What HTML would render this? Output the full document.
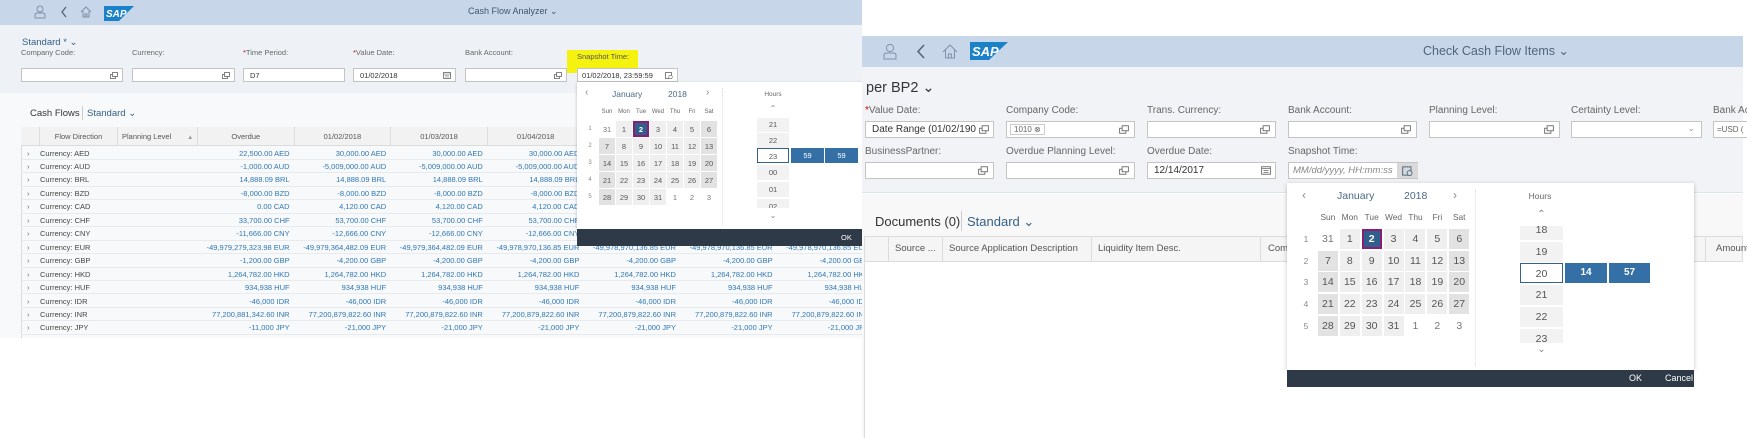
<!DOCTYPE html>
<html><head><meta charset="utf-8">
<style>
*{margin:0;padding:0;box-sizing:border-box}
body{width:1747px;height:438px;overflow:hidden;background:#fff;font-family:"Liberation Sans",sans-serif;position:relative}
.a{position:absolute}
.lbl{position:absolute;font-size:7.5px;color:#666;white-space:nowrap}
.inp{position:absolute;height:14px;background:#fff;border:1px solid #c4c4c4}
.vh{position:absolute;right:4px;top:3px;width:8px;height:7px}
.row{position:absolute;left:21px;height:13.45px;width:860px;border-bottom:1px solid #e8ebee;font-size:7.5px;line-height:13px;white-space:nowrap}
.row .ex{position:absolute;left:6px;color:#666}
.row .fd{position:absolute;left:19px;color:#444}
.row .v{position:absolute;width:96.6px;text-align:right;padding-right:5px;color:#2e77b5}
.c1{left:177px}.c2{left:273.6px}.c3{left:370.2px}.c4{left:466.8px}.c5{left:563.4px}.c6{left:660px}.c7{left:756.6px}
.hd{position:absolute;top:0;height:19px;line-height:19px;font-size:7.5px;color:#555;text-align:center;border-right:1px solid #dcdcdc}
.gl{position:absolute;display:grid;grid-template-columns:repeat(8,16px);grid-auto-rows:16px;column-gap:1px;row-gap:1px;font-size:7.5px;color:#555}
.gl div,.gr div{display:flex;align-items:center;justify-content:center}
.gr{position:absolute;display:grid;grid-template-columns:repeat(8,20px);grid-auto-rows:20px;column-gap:1.9px;row-gap:1.8px;font-size:10.5px;color:#555}
.w{background:#efefef}.e{background:#e2e2e2}.o{color:#777}.n{font-size:80%;color:#888}.h{font-size:80%;color:#666}
.s{background:#2f5f8a;color:#fff;font-weight:bold;outline:2px solid #8a1d78;outline-offset:-2px}
.hr{position:absolute;text-align:center;color:#555}
</style></head><body>

<!-- LEFT SCREEN -->
<div class="a" style="left:0;top:0;width:862px;height:25px;background:#c7d6e8"></div>
<svg class="a" style="left:34px;top:5px" width="12" height="14" viewBox="0 0 12 14"><circle cx="6" cy="4" r="3" fill="none" stroke="#7f93aa"/><path d="M1 13 V10 Q1 8 4 8 H8 Q11 8 11 10 V13 Z" fill="none" stroke="#7f93aa"/></svg>
<svg class="a" style="left:60px;top:6px" width="8" height="12"><path d="M6 1 L2 6 L6 11" fill="none" stroke="#50647c" stroke-width="1.3"/></svg>
<svg class="a" style="left:80px;top:6px" width="12" height="12"><path d="M1 6 L6 1 L11 6 M3 5 V11 H9 V5 M5 11 V8 H7 V11" fill="none" stroke="#7f93aa"/></svg>
<svg class="a" style="left:104px;top:6px" width="30" height="15"><path d="M0 0 H30 L15 15 H0 Z" fill="#1b82c9"/><text x="2" y="11" font-family="Liberation Sans" font-weight="bold" font-style="italic" font-size="10" fill="#fff">SAP</text></svg>
<div class="a" style="left:468px;top:6px;font-size:9px;color:#3f5670">Cash Flow Analyzer &#8964;</div>

<div class="a" style="left:0;top:25px;width:862px;height:68px;background:#eef2f6"></div>
<div class="a" style="left:22px;top:37px;font-size:9.5px;color:#346187">Standard * &#8964;</div>
<div class="lbl" style="left:21px;top:48px">Company Code:</div>
<div class="lbl" style="left:132px;top:48px">Currency:</div>
<div class="lbl" style="left:243px;top:48px"><span style="color:#c00">*</span>Time Period:</div>
<div class="lbl" style="left:353px;top:48px"><span style="color:#c00">*</span>Value Date:</div>
<div class="lbl" style="left:465px;top:48px">Bank Account:</div>
<div class="a" style="left:567px;top:50px;width:71px;height:23px;background:#f4f20e"></div>
<div class="lbl" style="left:577px;top:52px;color:#555">Snapshot Time:</div>
<div class="inp" style="left:21px;top:68px;width:102px"><svg class="vh" viewBox="0 0 8 7"><rect x="0.5" y="2.5" width="5" height="4" fill="none" stroke="#666" stroke-width=".8"/><rect x="2.5" y="0.5" width="5" height="4" fill="#fff" stroke="#666" stroke-width=".8"/></svg></div>
<div class="inp" style="left:132px;top:68px;width:103px"><svg class="vh" viewBox="0 0 8 7"><rect x="0.5" y="2.5" width="5" height="4" fill="none" stroke="#666" stroke-width=".8"/><rect x="2.5" y="0.5" width="5" height="4" fill="#fff" stroke="#666" stroke-width=".8"/></svg></div>
<div class="inp" style="left:243px;top:68px;width:102px;font-size:7.5px;padding:2px 6px;color:#333">D7</div>
<div class="inp" style="left:353px;top:68px;width:103px;font-size:7.5px;padding:2px 6px;color:#333">01/02/2018<svg class="vh" viewBox="0 0 8 7"><rect x="0.5" y="0.5" width="7" height="6" fill="none" stroke="#666" stroke-width=".8"/><path d="M0.5 2H7.5M2 3.5H6M2 5H6" stroke="#666" stroke-width=".6"/></svg></div>
<div class="inp" style="left:465px;top:68px;width:102px"><svg class="vh" viewBox="0 0 8 7"><rect x="0.5" y="2.5" width="5" height="4" fill="none" stroke="#666" stroke-width=".8"/><rect x="2.5" y="0.5" width="5" height="4" fill="#fff" stroke="#666" stroke-width=".8"/></svg></div>
<div class="inp" style="left:577px;top:68px;width:101px;font-size:7.5px;padding:2px 4px;color:#333">01/02/2018, 23:59:59<svg class="vh" viewBox="0 0 8 7"><rect x="0.5" y="0.5" width="6" height="6" fill="none" stroke="#666" stroke-width=".8"/><circle cx="5.5" cy="5" r="1.8" fill="#fff" stroke="#666" stroke-width=".6"/></svg></div>

<div class="a" style="left:0;top:93px;width:862px;height:245px;background:#f8f9fa"></div>
<div class="a" style="left:30px;top:108px;font-size:9.5px;color:#333">Cash Flows</div>
<div class="a" style="left:82px;top:106px;width:1px;height:14px;background:#ccc"></div>
<div class="a" style="left:87px;top:108px;font-size:9.5px;color:#346187">Standard &#8964;</div>

<div class="a" style="left:21px;top:127px;width:841px;height:211px;border-left:1px solid #dcdcdc"></div>
<div class="a" style="left:21px;top:127px;width:841px;height:19px;background:#f2f2f2;border-bottom:1px solid #dcdcdc">
<div class="hd" style="left:0;width:19px"></div>
<div class="hd" style="left:19px;width:78px">Flow Direction</div>
<div class="hd" style="left:97px;width:80px;text-align:left;padding-left:4px">Planning Level <span style="margin-left:14px;font-size:6px;color:#999">&#9650;</span></div>
<div class="hd" style="left:177px;width:96.6px">Overdue</div>
<div class="hd" style="left:273.6px;width:96.6px">01/02/2018</div>
<div class="hd" style="left:370.2px;width:96.6px">01/03/2018</div>
<div class="hd" style="left:466.8px;width:96.6px">01/04/2018</div>
<div class="hd" style="left:563.4px;width:96.6px">01/05/2018</div>
<div class="hd" style="left:660px;width:96.6px">01/08/2018</div>
<div class="hd" style="left:756.6px;width:96.6px">01/09/2018</div>
</div>

<div class="row" style="top:146.5px"><span class="ex">&#8250;</span><span class="fd">Currency: AED</span><span class="v c1">22,500.00 AED</span><span class="v c2">30,000.00 AED</span><span class="v c3">30,000.00 AED</span><span class="v c4">30,000.00 AED</span><span class="v c5">30,000.00 AED</span><span class="v c6">30,000.00 AED</span><span class="v c7">30,000.00 AED</span></div>
<div class="row" style="top:160px"><span class="ex">&#8250;</span><span class="fd">Currency: AUD</span><span class="v c1">-1,000.00 AUD</span><span class="v c2">-5,009,000.00 AUD</span><span class="v c3">-5,009,000.00 AUD</span><span class="v c4">-5,009,000.00 AUD</span><span class="v c5">-5,009,000.00 AUD</span><span class="v c6">-5,009,000.00 AUD</span><span class="v c7">-5,009,000.00 AUD</span></div>
<div class="row" style="top:173.4px"><span class="ex">&#8250;</span><span class="fd">Currency: BRL</span><span class="v c1">14,888.09 BRL</span><span class="v c2">14,888.09 BRL</span><span class="v c3">14,888.09 BRL</span><span class="v c4">14,888.09 BRL</span><span class="v c5">14,888.09 BRL</span><span class="v c6">14,888.09 BRL</span><span class="v c7">14,888.09 BRL</span></div>
<div class="row" style="top:186.9px"><span class="ex">&#8250;</span><span class="fd">Currency: BZD</span><span class="v c1">-8,000.00 BZD</span><span class="v c2">-8,000.00 BZD</span><span class="v c3">-8,000.00 BZD</span><span class="v c4">-8,000.00 BZD</span><span class="v c5">-8,000.00 BZD</span><span class="v c6">-8,000.00 BZD</span><span class="v c7">-8,000.00 BZD</span></div>
<div class="row" style="top:200.3px"><span class="ex">&#8250;</span><span class="fd">Currency: CAD</span><span class="v c1">0.00 CAD</span><span class="v c2">4,120.00 CAD</span><span class="v c3">4,120.00 CAD</span><span class="v c4">4,120.00 CAD</span><span class="v c5">4,120.00 CAD</span><span class="v c6">4,120.00 CAD</span><span class="v c7">4,120.00 CAD</span></div>
<div class="row" style="top:213.8px"><span class="ex">&#8250;</span><span class="fd">Currency: CHF</span><span class="v c1">33,700.00 CHF</span><span class="v c2">53,700.00 CHF</span><span class="v c3">53,700.00 CHF</span><span class="v c4">53,700.00 CHF</span><span class="v c5">53,700.00 CHF</span><span class="v c6">53,700.00 CHF</span><span class="v c7">53,700.00 CHF</span></div>
<div class="row" style="top:227.2px"><span class="ex">&#8250;</span><span class="fd">Currency: CNY</span><span class="v c1">-11,666.00 CNY</span><span class="v c2">-12,666.00 CNY</span><span class="v c3">-12,666.00 CNY</span><span class="v c4">-12,666.00 CNY</span><span class="v c5">-12,666.00 CNY</span><span class="v c6">-12,666.00 CNY</span><span class="v c7">-12,666.00 CNY</span></div>
<div class="row" style="top:240.7px"><span class="ex">&#8250;</span><span class="fd">Currency: EUR</span><span class="v c1">-49,979,279,323.98 EUR</span><span class="v c2">-49,979,364,482.09 EUR</span><span class="v c3">-49,979,364,482.09 EUR</span><span class="v c4">-49,978,970,136.85 EUR</span><span class="v c5">-49,978,970,136.85 EUR</span><span class="v c6">-49,978,970,136.85 EUR</span><span class="v c7">-49,978,970,136.85 EUR</span></div>
<div class="row" style="top:254.1px"><span class="ex">&#8250;</span><span class="fd">Currency: GBP</span><span class="v c1">-1,200.00 GBP</span><span class="v c2">-4,200.00 GBP</span><span class="v c3">-4,200.00 GBP</span><span class="v c4">-4,200.00 GBP</span><span class="v c5">-4,200.00 GBP</span><span class="v c6">-4,200.00 GBP</span><span class="v c7">-4,200.00 GBP</span></div>
<div class="row" style="top:267.6px"><span class="ex">&#8250;</span><span class="fd">Currency: HKD</span><span class="v c1">1,264,782.00 HKD</span><span class="v c2">1,264,782.00 HKD</span><span class="v c3">1,264,782.00 HKD</span><span class="v c4">1,264,782.00 HKD</span><span class="v c5">1,264,782.00 HKD</span><span class="v c6">1,264,782.00 HKD</span><span class="v c7">1,264,782.00 HKD</span></div>
<div class="row" style="top:281px"><span class="ex">&#8250;</span><span class="fd">Currency: HUF</span><span class="v c1">934,938 HUF</span><span class="v c2">934,938 HUF</span><span class="v c3">934,938 HUF</span><span class="v c4">934,938 HUF</span><span class="v c5">934,938 HUF</span><span class="v c6">934,938 HUF</span><span class="v c7">934,938 HUF</span></div>
<div class="row" style="top:294.5px"><span class="ex">&#8250;</span><span class="fd">Currency: IDR</span><span class="v c1">-46,000 IDR</span><span class="v c2">-46,000 IDR</span><span class="v c3">-46,000 IDR</span><span class="v c4">-46,000 IDR</span><span class="v c5">-46,000 IDR</span><span class="v c6">-46,000 IDR</span><span class="v c7">-46,000 IDR</span></div>
<div class="row" style="top:307.9px"><span class="ex">&#8250;</span><span class="fd">Currency: INR</span><span class="v c1">77,200,881,342.60 INR</span><span class="v c2">77,200,879,822.60 INR</span><span class="v c3">77,200,879,822.60 INR</span><span class="v c4">77,200,879,822.60 INR</span><span class="v c5">77,200,879,822.60 INR</span><span class="v c6">77,200,879,822.60 INR</span><span class="v c7">77,200,879,822.60 INR</span></div>
<div class="row" style="top:321.4px"><span class="ex">&#8250;</span><span class="fd">Currency: JPY</span><span class="v c1">-11,000 JPY</span><span class="v c2">-21,000 JPY</span><span class="v c3">-21,000 JPY</span><span class="v c4">-21,000 JPY</span><span class="v c5">-21,000 JPY</span><span class="v c6">-21,000 JPY</span><span class="v c7">-21,000 JPY</span></div>

<!-- left popover -->
<div class="a" style="left:577px;top:82px;width:290px;height:147px;background:#fff;box-shadow:0 1px 3px rgba(0,0,0,.25)"></div>
<div class="a" style="left:577px;top:229px;width:290px;height:17px;background:#2e3a47"></div>
<div class="a" style="left:841px;top:233px;font-size:7.5px;color:#fff">OK</div>
<div class="a" style="left:585px;top:87px;font-size:10px;color:#888">&#8249;</div>
<div class="a" style="left:612px;top:89px;font-size:8.5px;color:#4a6a8a">January</div>
<div class="a" style="left:668px;top:89px;font-size:8.5px;color:#4a6a8a">2018</div>
<div class="a" style="left:706px;top:87px;font-size:10px;color:#888">&#8250;</div>
<div class="a" style="left:722px;top:88px;width:0;height:138px;border-left:1px dotted #ddd"></div>
<div class="gl" style="left:582px;top:104px">
<div></div><div class="h">Sun</div><div class="h">Mon</div><div class="h">Tue</div><div class="h">Wed</div><div class="h">Thu</div><div class="h">Fri</div><div class="h">Sat</div>
<div class="n">1</div><div class="o">31</div><div class="w">1</div><div class="s">2</div><div class="w">3</div><div class="w">4</div><div class="w">5</div><div class="e">6</div>
<div class="n">2</div><div class="e">7</div><div class="w">8</div><div class="w">9</div><div class="w">10</div><div class="w">11</div><div class="w">12</div><div class="e">13</div>
<div class="n">3</div><div class="e">14</div><div class="w">15</div><div class="w">16</div><div class="w">17</div><div class="w">18</div><div class="w">19</div><div class="e">20</div>
<div class="n">4</div><div class="e">21</div><div class="w">22</div><div class="w">23</div><div class="w">24</div><div class="w">25</div><div class="w">26</div><div class="e">27</div>
<div class="n">5</div><div class="e">28</div><div class="w">29</div><div class="w">30</div><div class="w">31</div><div class="o">1</div><div class="o">2</div><div class="o">3</div>
</div>
<div class="a" style="left:757px;top:91px;width:32px;text-align:center;font-size:6.5px;color:#666">Hours</div>
<div class="a" style="left:757px;top:104px;width:32px;text-align:center;font-size:8px;color:#888">&#8963;</div>
<div class="a" style="left:757px;top:118px;width:32px;height:90px;overflow:hidden;font-size:7.5px;color:#555">
<div class="hr" style="top:-1px;width:32px;height:15px;line-height:15px;background:#f2f2f2">21</div>
<div class="hr" style="top:15px;width:32px;height:15px;line-height:15px;background:#f2f2f2">22</div>
<div class="hr" style="top:30px;width:32px;height:15px;line-height:15px;border:1px solid #346187;background:#fff">23</div>
<div class="hr" style="top:47px;width:32px;height:15px;line-height:15px;background:#f2f2f2">00</div>
<div class="hr" style="top:64px;width:32px;height:15px;line-height:15px;background:#f2f2f2">01</div>
<div class="hr" style="top:81px;width:32px;height:15px;line-height:15px;background:#f2f2f2">02</div>
</div>
<div class="a" style="left:791px;top:148px;width:33px;height:15px;background:#3470a6;color:#fff;font-size:7.5px;line-height:15px;text-align:center">59</div>
<div class="a" style="left:825px;top:148px;width:33px;height:15px;background:#3470a6;color:#fff;font-size:7.5px;line-height:15px;text-align:center">59</div>
<div class="a" style="left:757px;top:211px;width:32px;text-align:center;font-size:8px;color:#888">&#8964;</div>

<!-- RIGHT SCREEN -->
<div class="a" style="left:862px;top:0;width:885px;height:438px;background:#fff;overflow:hidden">
<div class="a" style="left:0;top:36px;width:881px;height:31px;background:#c7d6e8"></div>
<svg class="a" style="left:21px;top:43px" width="14" height="17" viewBox="0 0 14 17"><circle cx="7" cy="5" r="3.6" fill="none" stroke="#7f93aa"/><path d="M1 16 V12 Q1 10 4 10 H10 Q13 10 13 12 V16 Z" fill="none" stroke="#7f93aa"/></svg>
<svg class="a" style="left:54px;top:44px" width="10" height="15"><path d="M8 1 L2 7.5 L8 14" fill="none" stroke="#50647c" stroke-width="1.5"/></svg>
<svg class="a" style="left:80px;top:44px" width="16" height="15"><path d="M1 8 L8 1 L15 8 M3.5 6 V14 H12.5 V6 M6.5 14 V10 H9.5 V14" fill="none" stroke="#7f93aa"/></svg>
<svg class="a" style="left:108px;top:42px" width="38" height="18"><path d="M0 0 H38 L19 18 H0 Z" fill="#1b82c9"/><text x="2" y="14" font-family="Liberation Sans" font-weight="bold" font-style="italic" font-size="13" fill="#fff">SAP</text></svg>
<div class="a" style="left:561px;top:43px;font-size:12.5px;color:#50657c">Check Cash Flow Items &#8964;</div>

<div class="a" style="left:0;top:67px;width:881px;height:126px;background:#f1f3f6;border-bottom:1px solid #dde3ea"></div>
<div class="a" style="left:4px;top:80px;font-size:14.5px;color:#32363a">per BP2 &#8964;</div>
<div class="a" style="left:0;top:105px;font-size:10px;color:#666;white-space:nowrap">
<span class="a" style="left:3px"><span style="color:#c00">*</span>Value Date:</span>
<span class="a" style="left:144px">Company Code:</span>
<span class="a" style="left:285px">Trans. Currency:</span>
<span class="a" style="left:426px">Bank Account:</span>
<span class="a" style="left:567px">Planning Level:</span>
<span class="a" style="left:709px">Certainty Level:</span>
<span class="a" style="left:851px">Bank Acco</span>
</div>
<div class="a" style="left:0;top:146px;font-size:10px;color:#666;white-space:nowrap">
<span class="a" style="left:3px">BusinessPartner:</span>
<span class="a" style="left:144px">Overdue Planning Level:</span>
<span class="a" style="left:285px">Overdue Date:</span>
<span class="a" style="left:426px">Snapshot Time:</span>
</div>
<div class="inp" style="left:3px;top:121px;width:129px;height:17px;font-size:10px;padding:2px 6px;color:#333;overflow:hidden;white-space:nowrap">Date Range (01/02/190</div>
<div class="a" style="left:114px;top:122px;width:17px;height:15px;background:#fff"><svg class="a" style="left:3px;top:3px" width="10" height="9" viewBox="0 0 8 7"><rect x="0.5" y="2.5" width="5" height="4" fill="none" stroke="#666" stroke-width=".7"/><rect x="2.5" y="0.5" width="5" height="4" fill="#fff" stroke="#666" stroke-width=".7"/></svg></div>
<div class="inp" style="left:144px;top:121px;width:129px;height:17px"><span class="a" style="left:3px;top:2px;height:11px;border:1px solid #ccc;font-size:8px;padding:0 3px;color:#666;line-height:10px">1010 &#8855;</span><svg class="a" style="right:5px;top:3px" width="10" height="9" viewBox="0 0 8 7"><rect x="0.5" y="2.5" width="5" height="4" fill="none" stroke="#666" stroke-width=".7"/><rect x="2.5" y="0.5" width="5" height="4" fill="#fff" stroke="#666" stroke-width=".7"/></svg></div>
<div class="inp" style="left:285px;top:121px;width:129px;height:17px"><svg class="a" style="right:5px;top:3px" width="10" height="9" viewBox="0 0 8 7"><rect x="0.5" y="2.5" width="5" height="4" fill="none" stroke="#666" stroke-width=".7"/><rect x="2.5" y="0.5" width="5" height="4" fill="#fff" stroke="#666" stroke-width=".7"/></svg></div>
<div class="inp" style="left:426px;top:121px;width:129px;height:17px"><svg class="a" style="right:5px;top:3px" width="10" height="9" viewBox="0 0 8 7"><rect x="0.5" y="2.5" width="5" height="4" fill="none" stroke="#666" stroke-width=".7"/><rect x="2.5" y="0.5" width="5" height="4" fill="#fff" stroke="#666" stroke-width=".7"/></svg></div>
<div class="inp" style="left:567px;top:121px;width:131px;height:17px"><svg class="a" style="right:5px;top:3px" width="10" height="9" viewBox="0 0 8 7"><rect x="0.5" y="2.5" width="5" height="4" fill="none" stroke="#666" stroke-width=".7"/><rect x="2.5" y="0.5" width="5" height="4" fill="#fff" stroke="#666" stroke-width=".7"/></svg></div>
<div class="inp" style="left:709px;top:121px;width:131px;height:17px"><span class="a" style="right:6px;top:1px;font-size:9px;color:#999">&#8964;</span></div>
<div class="inp" style="left:851px;top:121px;width:40px;height:17px;font-size:8px;color:#666;padding:3px 3px">=USD (</div>
<div class="inp" style="left:3px;top:162px;width:129px;height:17px"><svg class="a" style="right:5px;top:3px" width="10" height="9" viewBox="0 0 8 7"><rect x="0.5" y="2.5" width="5" height="4" fill="none" stroke="#666" stroke-width=".7"/><rect x="2.5" y="0.5" width="5" height="4" fill="#fff" stroke="#666" stroke-width=".7"/></svg></div>
<div class="inp" style="left:144px;top:162px;width:129px;height:17px"><svg class="a" style="right:5px;top:3px" width="10" height="9" viewBox="0 0 8 7"><rect x="0.5" y="2.5" width="5" height="4" fill="none" stroke="#666" stroke-width=".7"/><rect x="2.5" y="0.5" width="5" height="4" fill="#fff" stroke="#666" stroke-width=".7"/></svg></div>
<div class="inp" style="left:285px;top:162px;width:129px;height:17px;font-size:10px;padding:2px 6px;color:#333">12/14/2017<svg class="a" style="right:4px;top:3px" width="10" height="9" viewBox="0 0 8 7"><rect x="0.5" y="0.5" width="7" height="6" fill="none" stroke="#666" stroke-width=".7"/><path d="M0.5 2H7.5M2 3.5H6M2 5H6" stroke="#666" stroke-width=".6"/></svg></div>
<div class="inp" style="left:426px;top:162px;width:130px;height:17px;font-size:9.5px;padding:2px 4px;color:#888;font-style:italic;white-space:nowrap;overflow:hidden">MM/dd/yyyy, HH:mm:ss</div>
<div class="a" style="left:535px;top:163px;width:21px;height:15px;background:#d9d9d9"><svg class="a" style="left:5px;top:3px" width="11" height="10" viewBox="0 0 8 7"><rect x="0.5" y="0.5" width="6" height="6" fill="none" stroke="#46647f" stroke-width=".7"/><circle cx="5.5" cy="5" r="1.8" fill="#d9d9d9" stroke="#46647f" stroke-width=".6"/></svg></div>

<div class="a" style="left:0;top:194px;width:881px;height:244px;background:#f8f8f8"></div>
<div class="a" style="left:13px;top:214px;font-size:13px;color:#333">Documents (0)</div>
<div class="a" style="left:99px;top:211px;width:1px;height:20px;background:#ccc"></div>
<div class="a" style="left:105px;top:214px;font-size:13px;color:#346187">Standard &#8964;</div>
<div class="a" style="left:2px;top:236px;width:879px;height:26px;background:#f5f5f5;border:1px solid #dcdcdc;font-size:9.5px;color:#555;line-height:24px;white-space:nowrap">
<span class="a" style="left:23px;top:0;height:24px;border-left:1px solid #dcdcdc"></span>
<span class="a" style="left:30px">Source ...</span>
<span class="a" style="left:77px;top:0;height:24px;border-left:1px solid #dcdcdc"></span>
<span class="a" style="left:84px">Source Application Description</span>
<span class="a" style="left:226px;top:0;height:24px;border-left:1px solid #dcdcdc"></span>
<span class="a" style="left:233px">Liquidity Item Desc.</span>
<span class="a" style="left:395px;top:0;height:24px;border-left:1px solid #dcdcdc"></span>
<span class="a" style="left:403px">Comp</span>
<span class="a" style="left:840px;top:0;height:24px;border-left:1px solid #dcdcdc"></span>
<span class="a" style="left:851px">Amount</span>
</div>
<div class="a" style="left:2px;top:262px;width:879px;height:176px;background:#fff;border-left:1px solid #dcdcdc"></div>

<!-- right popover -->
<div class="a" style="left:425px;top:183px;width:407px;height:187px;background:#fff;box-shadow:0 1px 4px rgba(0,0,0,.25)"></div>
<div class="a" style="left:425px;top:370px;width:407px;height:17px;background:#2e3a47;color:#fff;font-size:9px;line-height:17px">
<span class="a" style="left:342px">OK</span><span class="a" style="left:378px">Cancel</span></div>
<div class="a" style="left:440px;top:188px;font-size:12px;color:#888">&#8249;</div>
<div class="a" style="left:475px;top:190px;font-size:10.5px;color:#4a6a8a">January</div>
<div class="a" style="left:542px;top:190px;font-size:10.5px;color:#4a6a8a">2018</div>
<div class="a" style="left:591px;top:188px;font-size:12px;color:#888">&#8250;</div>
<div class="a" style="left:613px;top:190px;width:0;height:176px;border-left:1px dotted #ddd"></div>
<div class="gr" style="left:434px;top:207px">
<div></div><div class="h">Sun</div><div class="h">Mon</div><div class="h">Tue</div><div class="h">Wed</div><div class="h">Thu</div><div class="h">Fri</div><div class="h">Sat</div>
<div class="n">1</div><div class="o">31</div><div class="w">1</div><div class="s">2</div><div class="w">3</div><div class="w">4</div><div class="w">5</div><div class="e">6</div>
<div class="n">2</div><div class="e">7</div><div class="w">8</div><div class="w">9</div><div class="w">10</div><div class="w">11</div><div class="w">12</div><div class="e">13</div>
<div class="n">3</div><div class="e">14</div><div class="w">15</div><div class="w">16</div><div class="w">17</div><div class="w">18</div><div class="w">19</div><div class="e">20</div>
<div class="n">4</div><div class="e">21</div><div class="w">22</div><div class="w">23</div><div class="w">24</div><div class="w">25</div><div class="w">26</div><div class="e">27</div>
<div class="n">5</div><div class="e">28</div><div class="w">29</div><div class="w">30</div><div class="w">31</div><div class="o">1</div><div class="o">2</div><div class="o">3</div>
</div>
<div class="a" style="left:656px;top:191px;width:44px;text-align:center;font-size:8.5px;color:#666">Hours</div>
<div class="a" style="left:658px;top:209px;width:43px;text-align:center;font-size:10px;color:#888">&#8963;</div>
<div class="a" style="left:658px;top:226px;width:43px;height:117px;overflow:hidden;font-size:10.5px;color:#555">
<div class="hr" style="top:-6px;width:43px;height:20px;line-height:20px;background:#f2f2f2">18</div>
<div class="hr" style="top:16px;width:43px;height:20px;line-height:20px;background:#f2f2f2">19</div>
<div class="hr" style="top:37px;width:43px;height:20px;line-height:20px;border:1px solid #346187;background:#fff">20</div>
<div class="hr" style="top:59px;width:43px;height:20px;line-height:20px;background:#f2f2f2">21</div>
<div class="hr" style="top:81px;width:43px;height:20px;line-height:20px;background:#f2f2f2">22</div>
<div class="hr" style="top:103px;width:43px;height:20px;line-height:20px;background:#f2f2f2">23</div>
</div>
<div class="a" style="left:703px;top:263px;width:42px;height:20px;background:#3470a6;color:#fff;font-size:10px;font-weight:bold;line-height:20px;text-align:center">14</div>
<div class="a" style="left:747px;top:263px;width:41px;height:20px;background:#3470a6;color:#fff;font-size:10px;font-weight:bold;line-height:20px;text-align:center">57</div>
<div class="a" style="left:658px;top:344px;width:43px;text-align:center;font-size:10px;color:#888">&#8964;</div>
</div>
</body></html>
